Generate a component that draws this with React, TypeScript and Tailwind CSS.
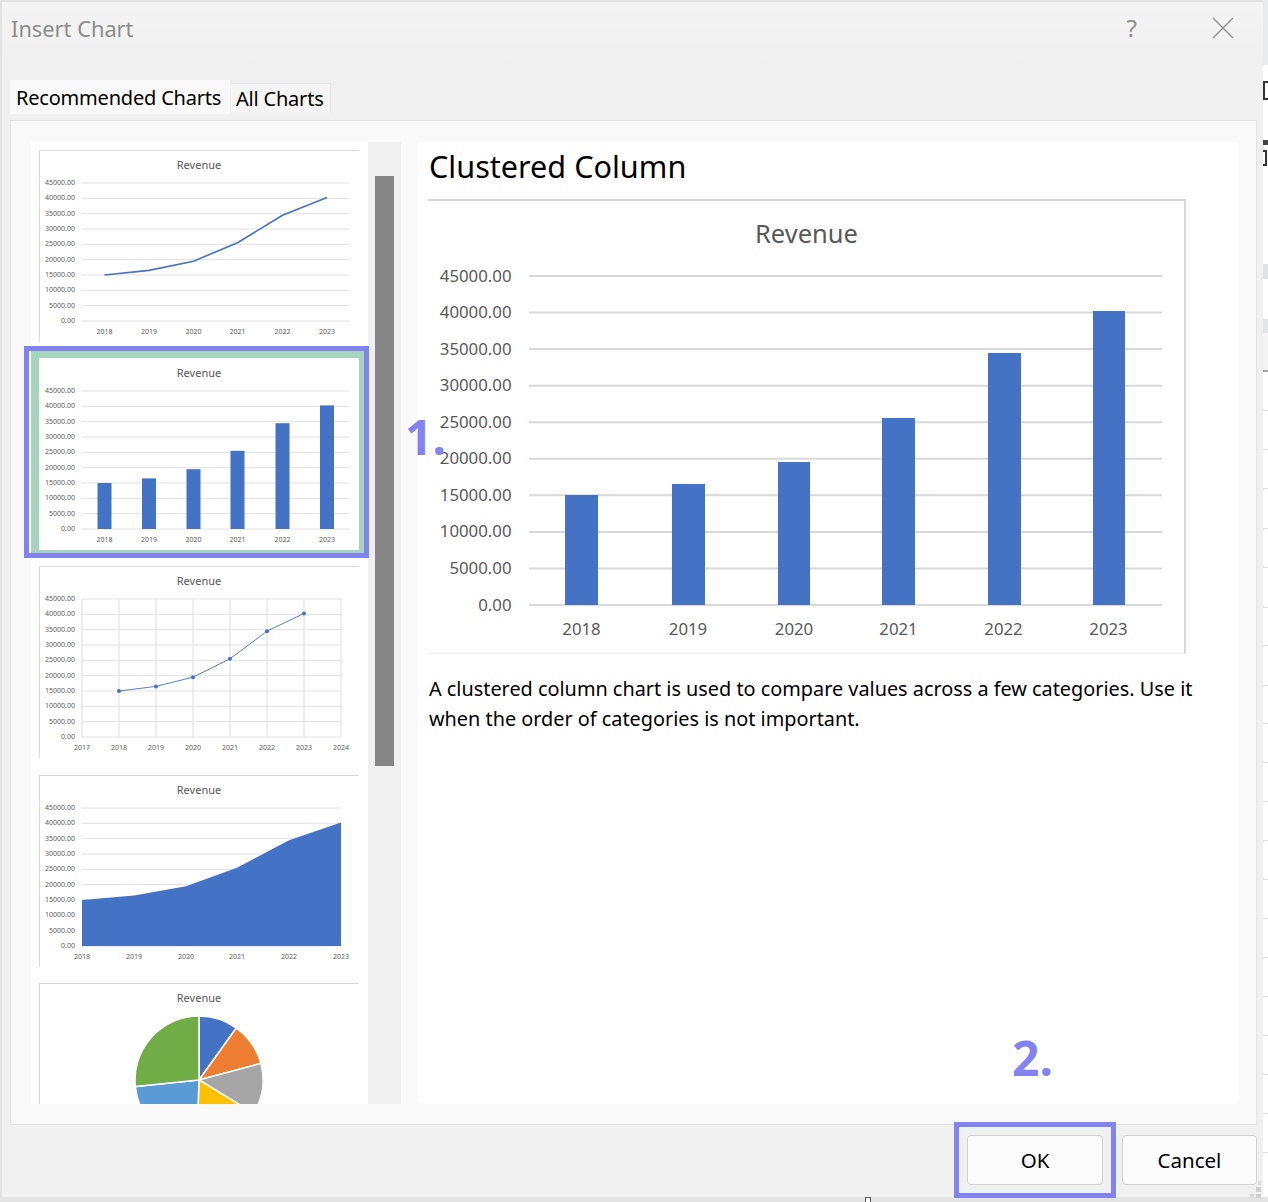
const values = [15000, 16500, 19500, 25500, 34500, 40300];
const ticks = ["45000.00", "40000.00", "35000.00", "30000.00", "25000.00", "20000.00", "15000.00", "10000.00", "5000.00", "0.00"];
const years = ["2018", "2019", "2020", "2021", "2022", "2023"];
const blue = "#4472c4";

const yFor = (v: number, top: number, bottom: number) => bottom - (v / 45000) * (bottom - top);

function YAxis({ top, bottom, x1, x2 }: { top: number; bottom: number; x1: number; x2: number }) {
  return (
    <>
      {ticks.map((t, i) => {
        const y = top + (i * (bottom - top)) / 9;
        return (
          <g key={t}>
            <line x1={x1} x2={x2} y1={y} y2={y} stroke="#e2e2e2" strokeWidth="1" />
            <text x="75" y={y + 2} textAnchor="end" className="fill-[#595959] text-[7px]">{t}</text>
          </g>
        );
      })}
    </>
  );
}

function Title({ y }: { y: number }) {
  return <text x="199" y={y} textAnchor="middle" className="fill-[#595959] text-[11px]">Revenue</text>;
}

function XLabels({ y, xs, labels = years }: { y: number; xs: number[]; labels?: string[] }) {
  return (
    <>
      {xs.map((x, i) => (
        <text key={labels[i]} x={x} y={y} textAnchor="middle" className="fill-[#595959] text-[7px]">{labels[i]}</text>
      ))}
    </>
  );
}

const colXs = [104.5, 149, 193.5, 237.5, 282.5, 327];

function LineThumb() {
  const pts = values.map((v, i) => `${colXs[i]},${yFor(v, 183, 321)}`).join(" ");
  return (
    <svg viewBox="40 151 319 191" className="block w-[319px] h-[191px]">
      <Title y={169} />
      <YAxis top={183} bottom={321} x1={82} x2={349} />
      <polyline points={pts} fill="none" stroke={blue} strokeWidth="1.6" />
      <XLabels y={334} xs={colXs} />
    </svg>
  );
}

function ColumnThumb() {
  return (
    <svg viewBox="39 150 320 192" className="block w-[320px] h-[192px]">
      <Title y={169} />
      <YAxis top={183} bottom={321} x1={82} x2={349} />
      {values.map((v, i) => {
        const y = yFor(v, 183, 321);
        return <rect key={i} x={colXs[i] - 7} y={y} width="14" height={321 - y} fill={blue} />;
      })}
      <XLabels y={334} xs={colXs} />
    </svg>
  );
}

function MarkerThumb() {
  const xs = [82, 119, 156, 193, 230, 267, 304, 341];
  const lineXs = xs.slice(1, 7);
  const pts = values.map((v, i) => [lineXs[i], yFor(v, 183, 321)]);
  return (
    <svg viewBox="40 151 319 191" className="block w-[319px] h-[191px]">
      <Title y={169} />
      <YAxis top={183} bottom={321} x1={82} x2={341} />
      {xs.map((x) => (
        <line key={x} x1={x} x2={x} y1={183} y2={321} stroke="#dedede" />
      ))}
      <polyline points={pts.map((p) => p.join(",")).join(" ")} fill="none" stroke={blue} strokeWidth="0.9" />
      {pts.map((p) => (
        <circle key={p[0]} cx={p[0]} cy={p[1]} r="2" fill={blue} />
      ))}
      <XLabels y={334} xs={xs} labels={["2017", ...years, "2024"]} />
    </svg>
  );
}

function AreaThumb() {
  const xs = [82, 134, 186, 237, 289, 341];
  const pts = values.map((v, i) => `${xs[i]},${yFor(v, 183, 321)}`).join(" ");
  return (
    <svg viewBox="40 151 319 191" className="block w-[319px] h-[191px]">
      <Title y={169} />
      <YAxis top={183} bottom={321} x1={82} x2={341} />
      <polygon points={`82,321 ${pts} 341,321`} fill={blue} />
      <XLabels y={334} xs={xs} />
    </svg>
  );
}

function PieThumb() {
  const colors = [blue, "#ed7d31", "#a5a5a5", "#ffc000", "#5b9bd5", "#70ad47"];
  const total = values.reduce((a, b) => a + b, 0);
  const cx = 199;
  const cy = 247;
  const r = 64;
  let acc = 0;
  const at = (a: number) => [cx + r * Math.sin(a), cy - r * Math.cos(a)];
  return (
    <svg viewBox="40 151 319 191" className="block w-[319px] h-[191px]">
      <Title y={169} />
      {values.map((v, i) => {
        const a0 = (acc / total) * Math.PI * 2;
        acc += v;
        const a1 = (acc / total) * Math.PI * 2;
        const [x0, y0] = at(a0);
        const [x1, y1] = at(a1);
        return (
          <path
            key={i}
            d={`M${cx} ${cy} L${x0} ${y0} A${r} ${r} 0 ${a1 - a0 > Math.PI ? 1 : 0} 1 ${x1} ${y1} Z`}
            fill={colors[i]}
            stroke="#fff"
            strokeWidth="1.5"
          />
        );
      })}
    </svg>
  );
}

function MainChart() {
  const gridXs = [581.5, 688, 794, 898.5, 1003.5, 1108.5];
  const bars = [
    [565, 33, 495],
    [672, 33, 484],
    [778, 32, 462],
    [882, 33, 418],
    [988, 33, 353],
    [1093, 32, 311],
  ];
  return (
    <svg viewBox="428 201 755 451" className="block w-[755px] h-[451px]">
      <text x="806.5" y="243" textAnchor="middle" className="fill-[#595959] text-[25.5px]">Revenue</text>
      {ticks.map((t, i) => {
        const y = 276 + (i * 329) / 9;
        return (
          <g key={t}>
            <line x1="529" x2="1162" y1={y} y2={y} stroke="#d9d9d9" strokeWidth="2" />
            <text x="511.5" y={y + 5.5} textAnchor="end" className="fill-[#595959] text-[16.8px]">{t}</text>
          </g>
        );
      })}
      {bars.map(([x, w, y]) => (
        <rect key={x} x={x} y={y} width={w} height={605 - y} fill={blue} />
      ))}
      {years.map((label, i) => (
        <text key={label} x={gridXs[i]} y="635" textAnchor="middle" className="fill-[#595959] text-[16.8px]">{label}</text>
      ))}
    </svg>
  );
}

function Frame({ children }: { children: React.ReactNode }) {
  return <div className="border-l border-t border-[#d9d9d9] w-[320px] h-[192px]">{children}</div>;
}

const sheetRows = [39, 39, 39, 40, 39, 40, 38, 40, 38, 39, 39, 39, 39, 39, 39, 39, 39, 39, 39, 39];

export default function App() {
  return (
    <div className="relative w-[1268px] h-[1202px] overflow-hidden bg-white text-black [font-family:'Noto_Sans',sans-serif]">
      <div className="flex h-[1197px]">
        <div className="w-[1263px] flex flex-col bg-[#f0f0f0] border-t-2 border-l-2 border-[#e2e2e2]">
          {/* title bar */}
          <div className="h-[63px] flex items-center justify-between pl-[9px] bg-linear-to-b from-[#f4f4f4] to-[#f0f0f0]">
            <span className="text-[21.8px] text-[#8c8c8c] -mt-[8px]">Insert Chart</span>
            <div className="flex items-center gap-[75px] pr-[29px] -mt-[12px]">
              <span className="text-[24px] text-[#8f8f8f]">?</span>
              <svg viewBox="0 0 22 22" className="w-[22px] h-[22px]">
                <path d="M1 1L21 21M21 1L1 21" stroke="#8f8f8f" strokeWidth="1.4" fill="none" />
              </svg>
            </div>
          </div>

          {/* tabs */}
          <div className="h-[55px] flex items-start pl-[8px] pt-[15px] whitespace-nowrap">
            <div className="h-[34px] w-[220px] bg-[#f9f9f9] pl-[6px] text-[20px] tracking-[-0.2px] leading-[36px]">Recommended Charts</div>
            <div className="h-[30px] w-[100px] mt-[3px] ml-px bg-[#f5f5f5] border-t border-r border-[#e6e6e6] pl-[5px] text-[20px] tracking-[-0.2px] leading-[30px]">All Charts</div>
          </div>

          {/* panel */}
          <div className="ml-[8px] w-[1247px] h-[1005px] bg-[#f9f9f9] border border-[#e2e2e2] pt-[21px] pl-[20px] flex">
            <div className="w-[337px] h-[962px] bg-white flex flex-col">
              <div className="h-[208px] pl-[8px] pt-[8px]">
                <Frame><LineThumb /></Frame>
              </div>
              <div className="relative h-[208px]">
                <div className="mt-px mr-[4px] h-[202px] bg-[#a5d5bc] pl-[8px] pt-[7px]">
                  <div className="bg-white w-[320px] h-[192px]"><ColumnThumb /></div>
                </div>
                <div className="absolute -left-[7px] -top-[4px] w-[345px] h-[212px] border-[5px] border-[#8282f0]" />
              </div>
              <div className="h-[209px] pl-[8px] pt-[8px]">
                <Frame><MarkerThumb /></Frame>
              </div>
              <div className="h-[208px] pl-[8px] pt-[8px]">
                <Frame><AreaThumb /></Frame>
              </div>
              <div className="h-[129px] pl-[8px] pt-[8px] overflow-hidden">
                <Frame><PieThumb /></Frame>
              </div>
            </div>

            <div className="w-[33px] h-[962px] bg-[#f0f0f0] pt-[34px] pl-[7px]">
              <div className="w-[19px] h-[590px] bg-[#868686]" />
            </div>

            <div className="relative ml-[17px] w-[820px] h-[962px] bg-white rounded-[4px] pl-[11px]">
              <h1 className="text-[30.6px] leading-[49px] h-[57px] font-normal">Clustered Column</h1>
              <div className="-ml-px w-[758px] h-[455px] border-t-2 border-r-2 border-b border-[#d9d9d9] border-b-[#eeeeee]">
                <MainChart />
              </div>
              <p className="mt-[20px] w-[790px] text-[19.85px] leading-[30px]">
                A clustered column chart is used to compare values across a few categories. Use it when the order of categories is not important.
              </p>
              <span className="absolute -left-[13px] top-[265px] text-[48px] leading-[60px] font-bold text-[#8282f0]">1.</span>
              <span className="absolute left-[594px] top-[886px] text-[48px] leading-[60px] font-bold text-[#8282f0]">2.</span>
            </div>
          </div>

          {/* footer */}
          <div className="relative flex justify-end gap-[19px] pt-[10px] pr-[6px]">
            <button className="w-[136px] h-[50px] rounded-[4px] bg-[#fbfbfb] border border-[#d0d0d0] text-[20.5px] leading-[48px]">OK</button>
            <button className="w-[135px] h-[50px] rounded-[4px] bg-[#fbfbfb] border border-[#d0d0d0] text-[20.5px] leading-[48px]">Cancel</button>
            <div className="absolute left-[952px] top-[-3px] w-[162px] h-[76px] border-[5px] border-[#8282f0]" />
          </div>
        </div>

        {/* sliver of the sheet behind the dialog */}
        <div className="flex-1 flex flex-col overflow-hidden">
          <div className="h-[65px] shrink-0 bg-[#e8ecec]" />
          <div className="mt-[16px] h-[19px] shrink-0 border-y-2 border-l-2 border-[#333]" />
          <div className="mt-[40px] w-[5px] h-[5px] shrink-0 bg-[#444]" />
          <div className="mt-[5px] h-[16px] w-[4px] shrink-0 border-y-2 border-r-2 border-[#333]" />
          <div className="mt-[98px] h-[15px] shrink-0 bg-[#dfe3e3]" />
          <div className="mt-[40px] h-[14px] shrink-0 bg-[#e3e6e6]" />
          <div className="h-[39px] shrink-0 bg-[#f4f4f4] border-b-2 border-[#a6a6a6]" />
          {sheetRows.map((h, i) => (
            <div key={i} className="shrink-0 border-b border-[#e0e0e0]" style={{ height: h }} />
          ))}
        </div>
      </div>
      <div className="h-[5px] bg-[#e4e4e4]" />

      {/* resize grip */}
      <svg viewBox="0 0 16 18" className="absolute left-[1248px] top-[1180px] w-[16px] h-[18px]">
        <rect x="10" y="1" width="3" height="4" fill="#dcdcdc" />
        <rect x="8" y="7" width="5" height="5" fill="#cfcfcf" />
        <rect x="8" y="14" width="5" height="4" fill="#cfcfcf" />
        <rect x="2" y="14" width="4" height="4" fill="#d8d8d8" />
      </svg>
      {/* sizing handle on the window's bottom edge */}
      <div className="absolute left-[865px] top-[1197px] w-[6px] h-[6px] bg-white border border-[#555]" />
    </div>
  );
}
